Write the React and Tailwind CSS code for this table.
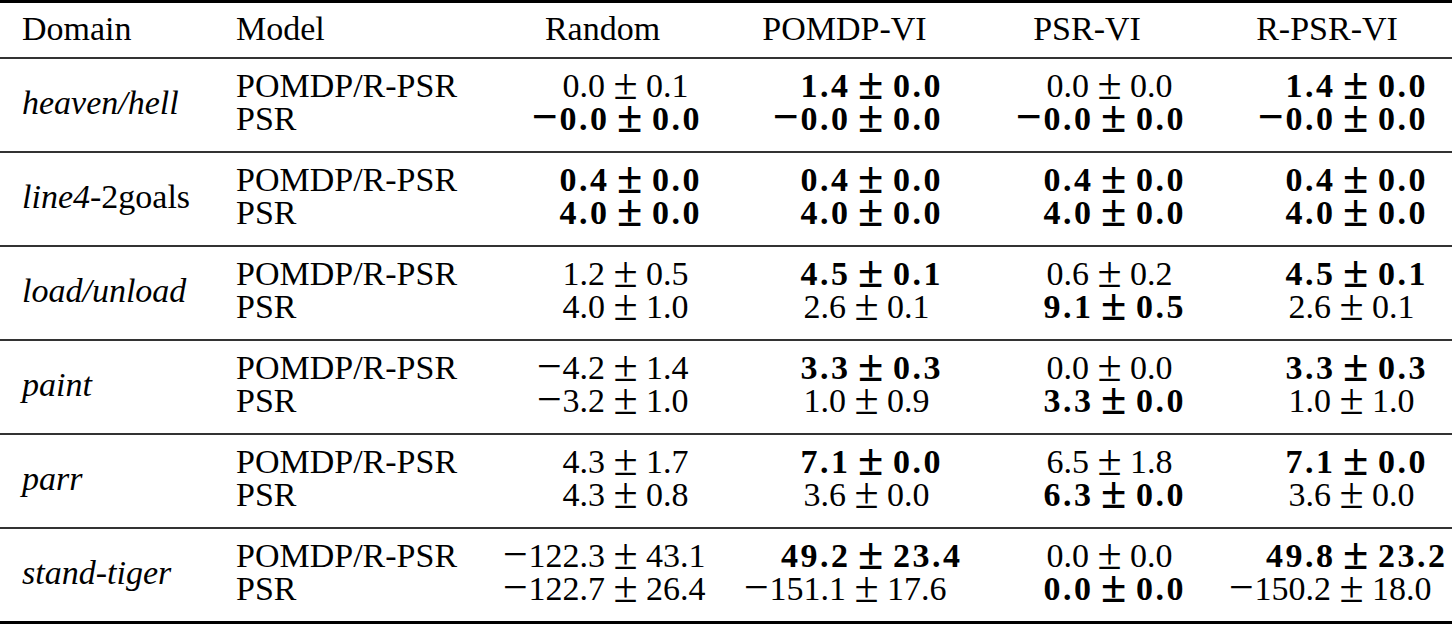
const groups = [
  {
    domain: <i>heaven/hell</i>,
    r1: ["0.0±0.1", "*1.4±0.0", "0.0±0.0", "*1.4±0.0"],
    r2: ["*−0.0±0.0", "*−0.0±0.0", "*−0.0±0.0", "*−0.0±0.0"],
  },
  {
    domain: (
      <>
        <i>line4</i>-2goals
      </>
    ),
    r1: ["*0.4±0.0", "*0.4±0.0", "*0.4±0.0", "*0.4±0.0"],
    r2: ["*4.0±0.0", "*4.0±0.0", "*4.0±0.0", "*4.0±0.0"],
  },
  {
    domain: <i>load/unload</i>,
    r1: ["1.2±0.5", "*4.5±0.1", "0.6±0.2", "*4.5±0.1"],
    r2: ["4.0±1.0", "2.6±0.1", "*9.1±0.5", "2.6±0.1"],
  },
  {
    domain: <i>paint</i>,
    r1: ["−4.2±1.4", "*3.3±0.3", "0.0±0.0", "*3.3±0.3"],
    r2: ["−3.2±1.0", "1.0±0.9", "*3.3±0.0", "1.0±1.0"],
  },
  {
    domain: <i>parr</i>,
    r1: ["4.3±1.7", "*7.1±0.0", "6.5±1.8", "*7.1±0.0"],
    r2: ["4.3±0.8", "3.6±0.0", "*6.3±0.0", "3.6±0.0"],
  },
  {
    domain: <i>stand-tiger</i>,
    r1: ["−122.3±43.1", "*49.2±23.4", "0.0±0.0", "*49.8±23.2"],
    r2: ["−122.7±26.4", "−151.1±17.6", "*0.0±0.0", "−150.2±18.0"],
  },
];

const cols = "grid grid-cols-[236px_246px_241px_243px_242px_238px]";

function Num({ v }) {
  const bold = v.startsWith("*");
  const s = bold ? v.slice(1) : v;
  const [a, b] = s.split("±");
  const neg = a.startsWith("−");
  const left = neg ? a.slice(1) : a;

  if (bold) {
    return (
      <div className="grid grid-cols-[125px_45px_1fr] items-baseline font-bold">
        <span className="text-right">
          {neg && (
            <span className="relative top-[2px] inline-block w-[30px] text-center text-[46px] leading-[0]">−</span>
          )}
          <span className="tracking-[2.5px] mr-[-2.5px]">{left}</span>
        </span>
        <span className="relative top-[2px] text-center text-[46px] leading-[0]">±</span>
        <span className="tracking-[2.5px]">{b}</span>
      </div>
    );
  }
  return (
    <div className="grid grid-cols-[123px_41px_1fr] items-baseline">
      <span className="text-right">
        {neg && (
          <span className="relative top-[2px] inline-block w-[26px] text-center text-[44px] leading-[0]">−</span>
        )}
        {left}
      </span>
      <span className="relative top-[2px] text-center text-[44px] leading-[0]">±</span>
      <span>{b}</span>
    </div>
  );
}

function Group({ g }) {
  return (
    <div className={`${cols} pt-[10px] pb-[16px]`}>
      <div className="row-span-2 flex items-center pl-[22px]">{g.domain}</div>
      <div>POMDP/R-PSR</div>
      {g.r1.map((v, i) => (
        <Num key={i} v={v} />
      ))}
      <div>PSR</div>
      {g.r2.map((v, i) => (
        <Num key={i} v={v} />
      ))}
    </div>
  );
}

export default function App() {
  return (
    <div className="bg-white w-[1454px] h-[624px] text-black font-['Liberation_Serif',serif] text-[34px] leading-[33px]">
      <div className="w-[1452px]">
        {/* top rule */}
        <div className="h-[3px] bg-black" />

        {/* Header */}
        <div className={`${cols} pt-[9px] pb-[12px]`}>
          <div className="pl-[22px]">Domain</div>
          <div>Model</div>
          <div className="text-center">Random</div>
          <div className="text-center">POMDP-VI</div>
          <div className="text-center">PSR-VI</div>
          <div className="text-center">R-PSR-VI</div>
        </div>

        {groups.map((g, i) => (
          <div key={i}>
            <div className="h-[2px] bg-[#333]" />
            <Group g={g} />
          </div>
        ))}

        {/* bottom rule */}
        <div className="h-[3px] bg-black" />
      </div>
    </div>
  );
}
